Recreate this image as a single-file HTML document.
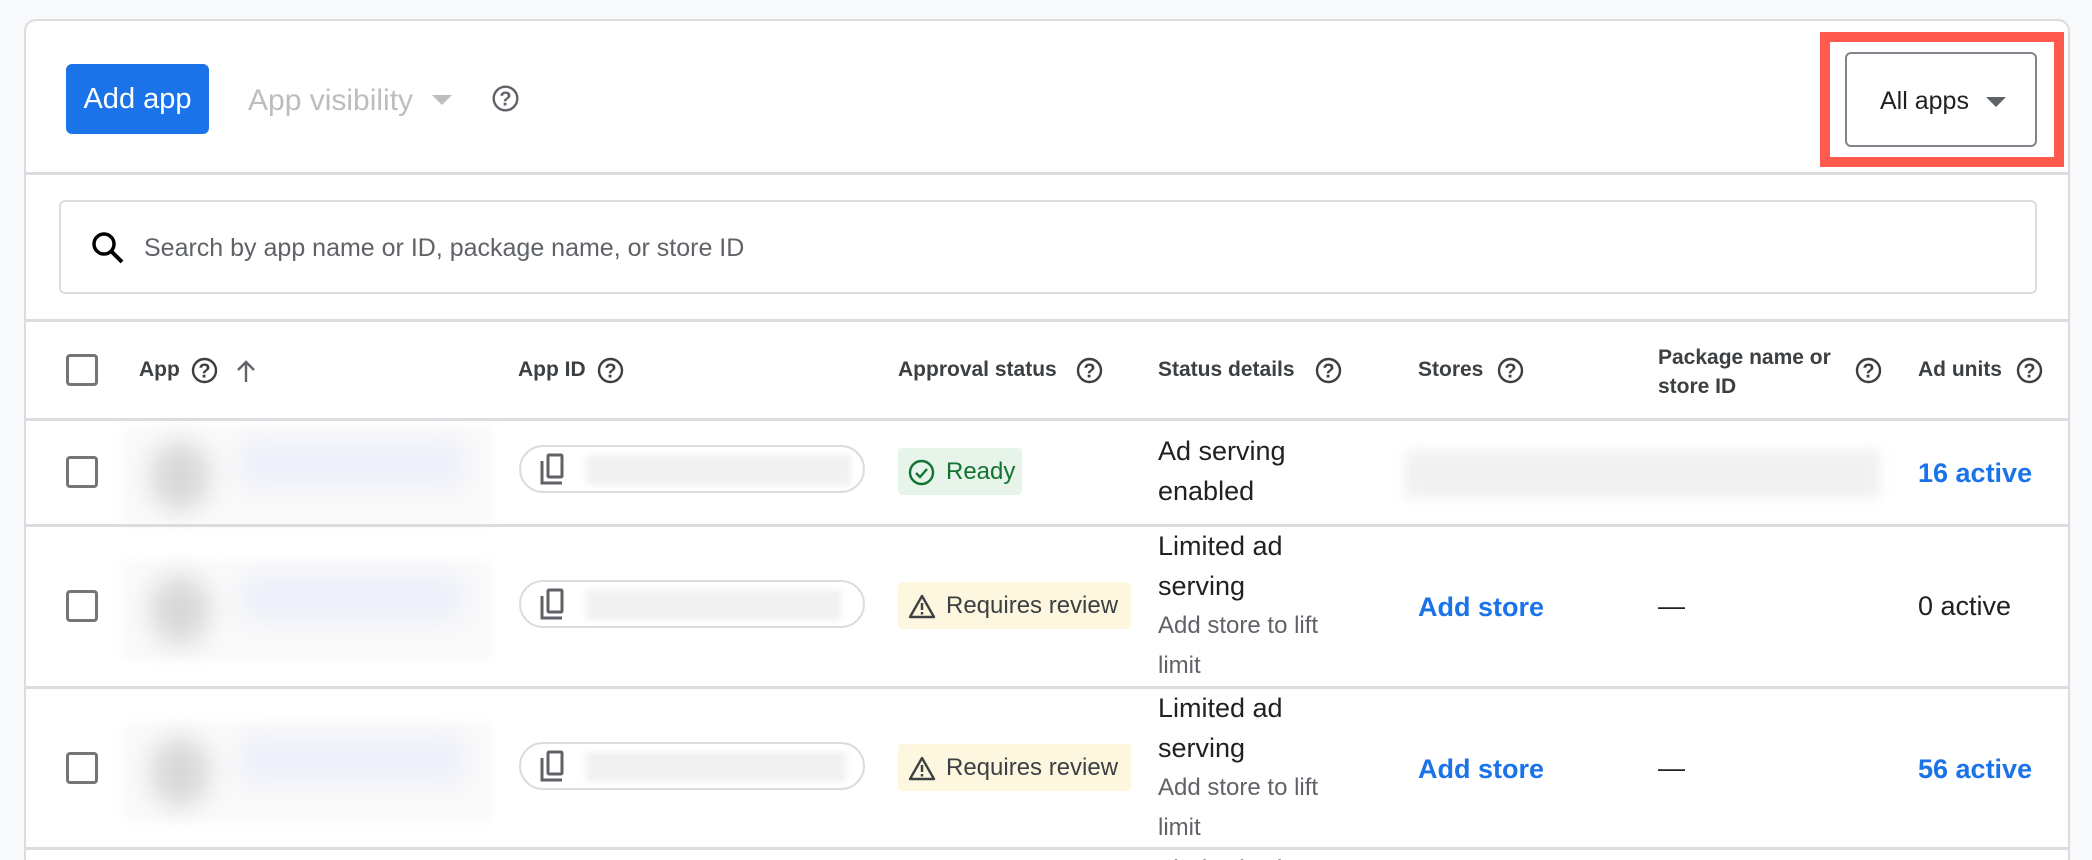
<!DOCTYPE html>
<html style="width:2092px;height:860px;overflow:hidden"><head><meta charset="utf-8">
<style>
*{box-sizing:border-box;margin:0;padding:0}
body{width:2092px;height:860px;overflow:hidden;background:#f8f9fa;font-family:"Liberation Sans",Arial,sans-serif;position:relative}
.abs{position:absolute}
.card{position:absolute;left:24px;top:19px;width:2046px;height:841px;background:#fff;border:2px solid #dadce0;border-bottom:none;border-radius:12px 12px 0 0}
.hr{position:absolute;left:25px;width:2044px;height:3px;background:#dadce0}
.cb{position:absolute;left:66px;width:32px;height:32px;border:3.5px solid #757575;border-radius:4px}
.hd{position:absolute;font-size:21px;font-weight:bold;color:#3c4043;white-space:nowrap}
.help{position:absolute;width:27px;height:27px}
.t{position:absolute;font-size:27px;color:#202124;white-space:nowrap;line-height:40px}
.s{position:absolute;font-size:24px;color:#5f6368;white-space:nowrap;line-height:40px}
.link{position:absolute;font-size:27px;color:#1a73e8;font-weight:bold;white-space:nowrap}
.pill{position:absolute;left:519px;width:346px;height:48px;border:2px solid #dadce0;border-radius:24px}
.pill .bar{position:absolute;left:65px;top:8px;width:265px;height:30px;background:#f1f1f1;filter:blur(3px)}
.blurapp{position:absolute;left:122px;width:370px;height:100px;background:#fafafa;filter:blur(4px)}
.blurapp .ic{position:absolute;left:28px;top:15px;width:60px;height:70px;border-radius:50%;background:#d8d8d8;filter:blur(12px)}
.blurapp .nm{position:absolute;left:120px;top:15px;width:220px;height:45px;background:#eceffa;filter:blur(12px)}
.chip{position:absolute;left:898px;height:47px;border-radius:4px;font-size:24px;line-height:47px;padding-left:48px;white-space:nowrap}
</style></head><body>
<div class="card"></div>

<!-- toolbar -->
<div class="abs" style="left:66px;top:64px;width:143px;height:70px;background:#1a73e8;border-radius:6px;color:#fff;font-size:29px;line-height:70px;text-align:center">Add app</div>
<div class="abs" style="left:248px;top:84px;font-size:30px;color:#bdbdbd;white-space:nowrap">App visibility</div>
<div class="abs" style="left:432px;top:95px;width:0;height:0;border-left:10px solid transparent;border-right:10px solid transparent;border-top:10px solid #bdbdbd"></div>
<svg class="help" style="left:492px;top:85px" viewBox="0 0 27 27"><circle cx="13.5" cy="13.5" r="11.8" fill="none" stroke="#5f6368" stroke-width="2.4"/><text x="13.5" y="20.5" text-anchor="middle" font-size="20" font-weight="bold" font-family="Liberation Sans" fill="#5f6368">?</text></svg>

<div class="abs" style="left:1820px;top:32px;width:244px;height:135px;border:10px solid #ff5a4e"></div>
<div class="abs" style="left:1845px;top:52px;width:192px;height:95px;border:2px solid #80868b;border-radius:6px"></div>
<div class="abs" style="left:1880px;top:87px;font-size:25px;color:#202124">All apps</div>
<div class="abs" style="left:1986px;top:97px;width:0;height:0;border-left:10px solid transparent;border-right:10px solid transparent;border-top:10px solid #5f6368"></div>

<div class="hr" style="top:172px"></div>

<!-- search -->
<div class="abs" style="left:59px;top:200px;width:1978px;height:94px;border:2px solid #dadce0;border-radius:6px"></div>
<svg class="abs" style="left:88px;top:228px" width="40" height="40" viewBox="0 0 40 40"><circle cx="16" cy="16" r="10" fill="none" stroke="#000" stroke-width="3.5"/><line x1="23" y1="23" x2="34" y2="34" stroke="#000" stroke-width="4"/></svg>
<div class="abs" style="left:144px;top:234px;font-size:25px;color:#5f6368;white-space:nowrap">Search by app name or ID, package name, or store ID</div>

<div class="hr" style="top:319px"></div>

<!-- header -->
<div class="cb" style="top:354px"></div>
<div class="hd" style="left:139px;top:358px">App</div>
<svg class="help" style="left:191px;top:357px" viewBox="0 0 27 27"><circle cx="13.5" cy="13.5" r="11.5" fill="none" stroke="#3c4043" stroke-width="2.4"/><text x="13.5" y="20.5" text-anchor="middle" font-size="20" font-weight="bold" font-family="Liberation Sans" fill="#3c4043">?</text></svg>
<svg class="abs" style="left:233px;top:358px" width="26" height="26" viewBox="0 0 26 26"><path d="M13 24V4M5 12l8-8 8 8" fill="none" stroke="#5f6368" stroke-width="2.4"/></svg>
<div class="hd" style="left:518px;top:358px">App ID</div>
<svg class="help" style="left:597px;top:357px" viewBox="0 0 27 27"><circle cx="13.5" cy="13.5" r="11.5" fill="none" stroke="#3c4043" stroke-width="2.4"/><text x="13.5" y="20.5" text-anchor="middle" font-size="20" font-weight="bold" font-family="Liberation Sans" fill="#3c4043">?</text></svg>
<div class="hd" style="left:898px;top:358px">Approval status</div>
<svg class="help" style="left:1076px;top:357px" viewBox="0 0 27 27"><circle cx="13.5" cy="13.5" r="11.5" fill="none" stroke="#3c4043" stroke-width="2.4"/><text x="13.5" y="20.5" text-anchor="middle" font-size="20" font-weight="bold" font-family="Liberation Sans" fill="#3c4043">?</text></svg>
<div class="hd" style="left:1158px;top:358px">Status details</div>
<svg class="help" style="left:1315px;top:357px" viewBox="0 0 27 27"><circle cx="13.5" cy="13.5" r="11.5" fill="none" stroke="#3c4043" stroke-width="2.4"/><text x="13.5" y="20.5" text-anchor="middle" font-size="20" font-weight="bold" font-family="Liberation Sans" fill="#3c4043">?</text></svg>
<div class="hd" style="left:1418px;top:358px">Stores</div>
<svg class="help" style="left:1497px;top:357px" viewBox="0 0 27 27"><circle cx="13.5" cy="13.5" r="11.5" fill="none" stroke="#3c4043" stroke-width="2.4"/><text x="13.5" y="20.5" text-anchor="middle" font-size="20" font-weight="bold" font-family="Liberation Sans" fill="#3c4043">?</text></svg>
<div class="hd" style="left:1658px;top:343px;line-height:29px">Package name or<br>store ID</div>
<svg class="help" style="left:1855px;top:357px" viewBox="0 0 27 27"><circle cx="13.5" cy="13.5" r="11.5" fill="none" stroke="#3c4043" stroke-width="2.4"/><text x="13.5" y="20.5" text-anchor="middle" font-size="20" font-weight="bold" font-family="Liberation Sans" fill="#3c4043">?</text></svg>
<div class="hd" style="left:1918px;top:358px">Ad units</div>
<svg class="help" style="left:2016px;top:357px" viewBox="0 0 27 27"><circle cx="13.5" cy="13.5" r="11.5" fill="none" stroke="#3c4043" stroke-width="2.4"/><text x="13.5" y="20.5" text-anchor="middle" font-size="20" font-weight="bold" font-family="Liberation Sans" fill="#3c4043">?</text></svg>

<div class="hr" style="top:418px"></div>

<!-- row 1 -->
<div class="cb" style="top:456px"></div>
<div class="blurapp" style="top:426px"><div class="ic"></div><div class="nm"></div></div>
<div class="pill" style="top:445px"><div class="bar"></div><svg class="abs" style="left:18px;top:6px" width="32" height="34" viewBox="0 0 32 34"><path d="M3 8v22h20" fill="none" stroke="#5f6368" stroke-width="3"/><rect x="9" y="2" width="14" height="22" rx="1" fill="none" stroke="#5f6368" stroke-width="3"/></svg></div>
<div class="chip" style="top:448px;width:124px;background:#e6f4ea;color:#137333">Ready<svg class="abs" style="left:10px;top:11px" width="27" height="27" viewBox="0 0 27 27"><circle cx="13.5" cy="13.5" r="11.5" fill="none" stroke="#137333" stroke-width="2.4"/><path d="M8 14l4 4 7-8" fill="none" stroke="#137333" stroke-width="2.4"/></svg></div>
<div class="t" style="left:1158px;top:431px">Ad serving<br>enabled</div>
<div class="abs" style="left:1405px;top:450px;width:475px;height:48px;background:#f1f1f1;filter:blur(6px)"></div>
<div class="link" style="left:1918px;top:458px">16 active</div>

<div class="hr" style="top:524px"></div>

<!-- row 2 -->
<div class="cb" style="top:590px"></div>
<div class="blurapp" style="top:560px"><div class="ic"></div><div class="nm"></div></div>
<div class="pill" style="top:580px"><div class="bar" style="width:255px"></div><svg class="abs" style="left:18px;top:6px" width="32" height="34" viewBox="0 0 32 34"><path d="M3 8v22h20" fill="none" stroke="#5f6368" stroke-width="3"/><rect x="9" y="2" width="14" height="22" rx="1" fill="none" stroke="#5f6368" stroke-width="3"/></svg></div>
<div class="chip" style="top:582px;width:233px;background:#fef7e0;color:#3c4043">Requires review<svg class="abs" style="left:10px;top:11px" width="28" height="26" viewBox="0 0 28 26"><path d="M14 3L2 24h24z" fill="none" stroke="#3c4043" stroke-width="2.4" stroke-linejoin="round"/><path d="M14 10v7M14 19v2.5" stroke="#3c4043" stroke-width="2.4"/></svg></div>
<div class="t" style="left:1158px;top:526px">Limited ad<br>serving</div>
<div class="s" style="left:1158px;top:606px">Add store to lift<br>limit</div>
<div class="link" style="left:1418px;top:592px">Add store</div>
<div class="t" style="left:1658px;top:586px">—</div>
<div class="t" style="left:1918px;top:586px">0 active</div>

<div class="hr" style="top:686px"></div>

<!-- row 3 -->
<div class="cb" style="top:752px"></div>
<div class="blurapp" style="top:722px"><div class="ic"></div><div class="nm"></div></div>
<div class="pill" style="top:742px"><div class="bar" style="width:260px"></div><svg class="abs" style="left:18px;top:6px" width="32" height="34" viewBox="0 0 32 34"><path d="M3 8v22h20" fill="none" stroke="#5f6368" stroke-width="3"/><rect x="9" y="2" width="14" height="22" rx="1" fill="none" stroke="#5f6368" stroke-width="3"/></svg></div>
<div class="chip" style="top:744px;width:233px;background:#fef7e0;color:#3c4043">Requires review<svg class="abs" style="left:10px;top:11px" width="28" height="26" viewBox="0 0 28 26"><path d="M14 3L2 24h24z" fill="none" stroke="#3c4043" stroke-width="2.4" stroke-linejoin="round"/><path d="M14 10v7M14 19v2.5" stroke="#3c4043" stroke-width="2.4"/></svg></div>
<div class="t" style="left:1158px;top:688px">Limited ad<br>serving</div>
<div class="s" style="left:1158px;top:768px">Add store to lift<br>limit</div>
<div class="link" style="left:1418px;top:754px">Add store</div>
<div class="t" style="left:1658px;top:748px">—</div>
<div class="link" style="left:1918px;top:754px">56 active</div>

<div class="hr" style="top:847px"></div>
<div class="t" style="left:1158px;top:850px">Limited ad</div>
</body></html>
